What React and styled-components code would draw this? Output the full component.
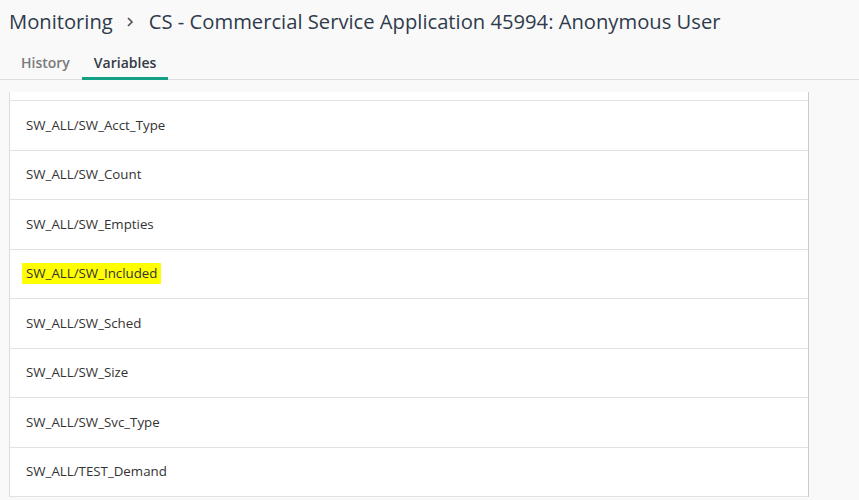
import React from "react";
import styled, { createGlobalStyle } from "styled-components";

const rows = [
  { name: "SW_ALL/SW_Acct_Type" },
  { name: "SW_ALL/SW_Count" },
  { name: "SW_ALL/SW_Empties" },
  { name: "SW_ALL/SW_Included", marked: true },
  { name: "SW_ALL/SW_Sched" },
  { name: "SW_ALL/SW_Size" },
  { name: "SW_ALL/SW_Svc_Type" },
  { name: "SW_ALL/TEST_Demand" },
];

export default function App() {
  return (
    <>
      <GlobalStyle />
      <Page>
        <Header>
          <Crumb>Monitoring</Crumb>
          <Chevron viewBox="0 0 10 10">
            <path d="M3 1 L7 5 L3 9" fill="none" stroke="#555" strokeWidth="1.7" />
          </Chevron>
          <Crumb>CS - Commercial Service Application 45994: Anonymous User</Crumb>
        </Header>
        <Tabs>
          <Tab>History</Tab>
          <Tab active>Variables</Tab>
        </Tabs>
        <Panel>
          <TopGap />
          {rows.map((r) => (
            <Row key={r.name}>
              <Label marked={r.marked}>{r.name}</Label>
            </Row>
          ))}
        </Panel>
      </Page>
    </>
  );
}

/* Styles */

const GlobalStyle = createGlobalStyle`
  html, body {
    margin: 0;
    padding: 0;
    background: #f9f9f9;
    font-family: "Open Sans", "Noto Sans", sans-serif;
    overflow: hidden;
  }
`;

const Page = styled.div`
  width: 859px;
  height: 500px;
  overflow: hidden;
  background: #f9f9f9;
`;

const Header = styled.div`
  display: flex;
  align-items: center;
  padding: 5px 0 0 9px;
  height: 32px;
`;

const Crumb = styled.span`
  font-size: 20.2px;
  color: #2f3b4c;
  white-space: nowrap;
`;

const Chevron = styled.svg`
  width: 10px;
  height: 10px;
  margin: 1px 14px 0 12px;
`;

const Tabs = styled.div`
  display: flex;
  margin-top: 11px;
  padding-left: 9px;
  border-bottom: 1px solid #dddddd;
  height: 31px;
`;

const Tab = styled.div`
  padding: 3px 12px 0;
  font-size: 14px;
  line-height: 24px;
  font-weight: 600;
  color: ${(p) => (p.active ? "#333a44" : "#7a7a7a")};
  border-bottom: 3px solid ${(p) => (p.active ? "#14a085" : "transparent")};
  margin-bottom: -1px;
  height: 32px;
  box-sizing: border-box;
`;

const Panel = styled.div`
  margin: 12px 0 0 9px;
  width: 798px;
  background: #ffffff;
  border-left: 1px solid #dddddd;
  border-right: 1px solid #cccccc;
`;

const TopGap = styled.div`
  height: 8px;
`;

const Row = styled.div`
  height: 49.5px;
  box-sizing: border-box;
  border-top: 1px solid #e2e2e2;
  display: flex;
  align-items: center;
  padding-left: 12px;
  &:last-child {
    border-bottom: 1px solid #e2e2e2;
    height: 50.5px;
  }
`;

const Label = styled.span`
  font-size: 13.3px;
  color: #333333;
  padding: 1px 4px 2px;
  background: ${(p) => (p.marked ? "#ffff00" : "transparent")};
`;
